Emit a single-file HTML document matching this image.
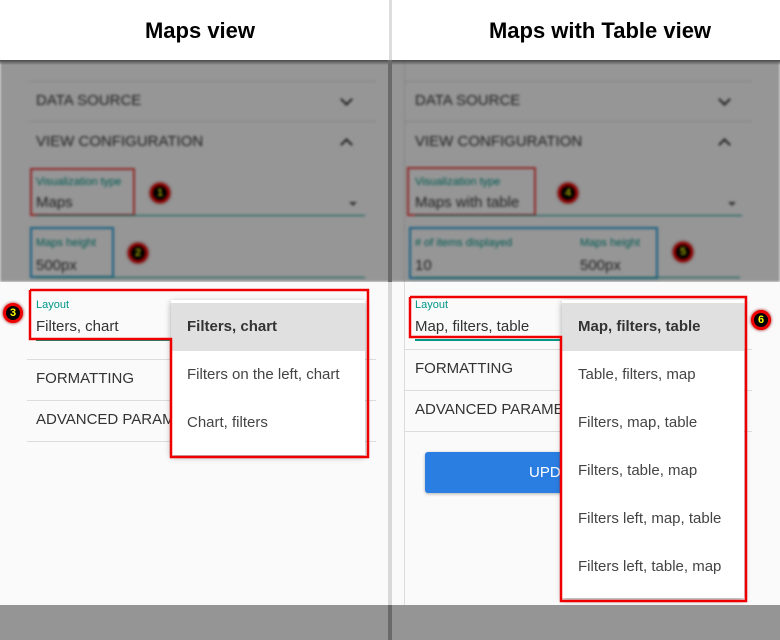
<!DOCTYPE html>
<html><head><meta charset="utf-8"><style>
*{margin:0;padding:0;box-sizing:border-box}
body{width:780px;height:640px;overflow:hidden;background:#fafafa;font-family:"Liberation Sans",Arial,sans-serif;position:relative;color:#333}
.a{position:absolute}
.t{position:absolute;white-space:nowrap;line-height:1}
.hl{position:absolute;height:1px;background:#dcdcdc}
.lbl{font-size:11px;color:#009688}
.val{font-size:15px;color:#333}
.sec{font-size:15px;color:#333}
.badge{position:absolute;width:20px;height:20px;border-radius:50%;background:#000;border:3px solid #e00;box-shadow:0 0 3px #900;color:#ff0;font-size:11px;font-weight:bold;text-align:center;line-height:14px}
.menu{position:absolute;background:#fff;box-shadow:0 2px 6px rgba(0,0,0,.35)}
.mi{height:48px;line-height:48px;padding-left:16px;font-size:15px;color:#444;white-space:nowrap;overflow:hidden}
.mi.s{background:#e0e0e0;font-weight:bold;color:#333}
.chev{position:absolute;width:9px;height:9px;border-right:2.5px solid #333;border-bottom:2.5px solid #333}
</style></head><body>

<!-- header -->
<div class="a" style="left:0;top:0;width:780px;height:60px;background:#fff"></div>
<div class="a" style="left:389px;top:0;width:3px;height:60px;background:#ddd"></div>
<div class="t" style="left:0;width:400px;text-align:center;top:20px;font-size:22px;font-weight:bold;color:#000">Maps view</div>
<div class="t" style="left:390px;width:420px;text-align:center;top:20px;font-size:22px;font-weight:bold;color:#000">Maps with Table view</div>

<!-- LEFT -->
<div class="hl" style="left:27px;top:81px;width:349px"></div>
<div class="t sec" style="left:36px;top:93px">DATA SOURCE</div>
<div class="chev" style="left:342px;top:95px;transform:rotate(45deg)"></div>
<div class="hl" style="left:27px;top:121px;width:349px"></div>
<div class="t sec" style="left:36px;top:134px">VIEW CONFIGURATION</div>
<div class="chev" style="left:342px;top:140px;transform:rotate(-135deg)"></div>
<div class="a" style="left:30px;top:168px;width:105px;height:48px;border:2px solid #e44"></div>
<div class="t lbl" style="left:36px;top:177px">Visualization type</div>
<div class="t val" style="left:36px;top:195px">Maps</div>
<div class="a" style="left:36px;top:215px;width:329px;height:1px;background:#009688"></div>
<div class="a" style="left:349px;top:202px;border:4px solid transparent;border-top:4px solid #555"></div>
<div class="badge" style="left:150px;top:183px">1</div>
<div class="a" style="left:30px;top:227px;width:84px;height:51px;border:2px solid #2a9fd6"></div>
<div class="t lbl" style="left:36px;top:238px">Maps height</div>
<div class="t val" style="left:36px;top:258px">500px</div>
<div class="a" style="left:36px;top:277px;width:329px;height:1px;background:#009688"></div>
<div class="badge" style="left:128px;top:243px">2</div>

<div class="t lbl" style="left:36px;top:300px">Layout</div>
<div class="t val" style="left:36px;top:319px">Filters, chart</div>
<div class="a" style="left:36px;top:339px;width:140px;height:2px;background:#009688"></div>
<div class="hl" style="left:27px;top:359px;width:349px"></div>
<div class="t sec" style="left:36px;top:371px">FORMATTING</div>
<div class="hl" style="left:27px;top:400px;width:349px"></div>
<div class="t sec" style="left:36px;top:412px">ADVANCED PARAMETERS</div>
<div class="hl" style="left:27px;top:441px;width:349px"></div>
<div class="menu" style="left:171px;top:300px;width:194px;height:155px;padding-top:3px">
<div class="mi s">Filters, chart</div><div class="mi">Filters on the left, chart</div><div class="mi">Chart, filters</div></div>
<svg class="a" style="left:0;top:0" width="780" height="640"><polyline points="30,290 368,290 368,457 171,457 171,339 30,339 30,290" fill="none" stroke="#e00" stroke-width="2.5"/></svg>
<div class="badge" style="left:3px;top:303px">3</div>

<!-- RIGHT -->
<div class="a" style="left:404px;top:60px;width:1px;height:545px;background:#dcdcdc"></div>
<div class="hl" style="left:405px;top:81px;width:347px"></div>
<div class="t sec" style="left:415px;top:93px">DATA SOURCE</div>
<div class="chev" style="left:720px;top:95px;transform:rotate(45deg)"></div>
<div class="hl" style="left:405px;top:121px;width:347px"></div>
<div class="t sec" style="left:415px;top:134px">VIEW CONFIGURATION</div>
<div class="chev" style="left:720px;top:140px;transform:rotate(-135deg)"></div>
<div class="a" style="left:407px;top:167px;width:129px;height:49px;border:2px solid #e44"></div>
<div class="t lbl" style="left:415px;top:177px">Visualization type</div>
<div class="t val" style="left:415px;top:195px">Maps with table</div>
<div class="a" style="left:415px;top:215px;width:327px;height:1px;background:#009688"></div>
<div class="a" style="left:728px;top:202px;border:4px solid transparent;border-top:4px solid #555"></div>
<div class="badge" style="left:558px;top:183px">4</div>
<div class="a" style="left:409px;top:227px;width:249px;height:52px;border:2px solid #2a9fd6"></div>
<div class="t lbl" style="left:415px;top:238px"># of items displayed</div>
<div class="t lbl" style="left:580px;top:238px">Maps height</div>
<div class="t val" style="left:415px;top:258px">10</div>
<div class="t val" style="left:580px;top:258px">500px</div>
<div class="a" style="left:415px;top:277px;width:325px;height:1px;background:#009688"></div>
<div class="badge" style="left:673px;top:242px">5</div>

<div class="t lbl" style="left:415px;top:300px">Layout</div>
<div class="t val" style="left:415px;top:319px">Map, filters, table</div>
<div class="a" style="left:415px;top:339px;width:150px;height:2px;background:#009688"></div>
<div class="hl" style="left:405px;top:349px;width:347px"></div>
<div class="t sec" style="left:415px;top:361px">FORMATTING</div>
<div class="hl" style="left:405px;top:390px;width:347px"></div>
<div class="t sec" style="left:415px;top:402px">ADVANCED PARAMETERS</div>
<div class="hl" style="left:405px;top:431px;width:347px"></div>
<div class="a" style="left:425px;top:452px;width:300px;height:41px;background:#2a7de1;border-radius:3px;box-shadow:0 1px 3px rgba(0,0,0,.3);color:#fff;font-size:15px;line-height:41px;padding-left:104px">UPDATE</div>
<div class="menu" style="left:562px;top:300px;width:182px;height:298px;padding-top:3px">
<div class="mi s">Map, filters, table</div><div class="mi">Table, filters, map</div><div class="mi">Filters, map, table</div><div class="mi">Filters, table, map</div><div class="mi">Filters left, map, table</div><div class="mi">Filters left, table, map</div></div>
<svg class="a" style="left:0;top:0" width="780" height="640"><polyline points="410,297 746,297 746,601 561,601 561,337 410,337 410,297" fill="none" stroke="#e00" stroke-width="2.5"/></svg>
<div class="badge" style="left:751px;top:310px">6</div>

<!-- overlays -->
<div class="a" style="left:0;top:60px;width:780px;height:222px;backdrop-filter:blur(1.3px) brightness(0.6);-webkit-backdrop-filter:blur(1.3px) brightness(0.6)"></div>
<div class="a" style="left:0;top:605px;width:780px;height:35px;background:#959595"></div>
<div class="a" style="left:0;top:60px;width:780px;height:5px;background:linear-gradient(#444,rgba(0,0,0,0))"></div>
<div class="a" style="left:388px;top:60px;width:4px;height:580px;background:#6a6a6a"></div>
<div class="a" style="left:388px;top:282px;width:4px;height:323px;background:#d8d8d8"></div>
</body></html>
